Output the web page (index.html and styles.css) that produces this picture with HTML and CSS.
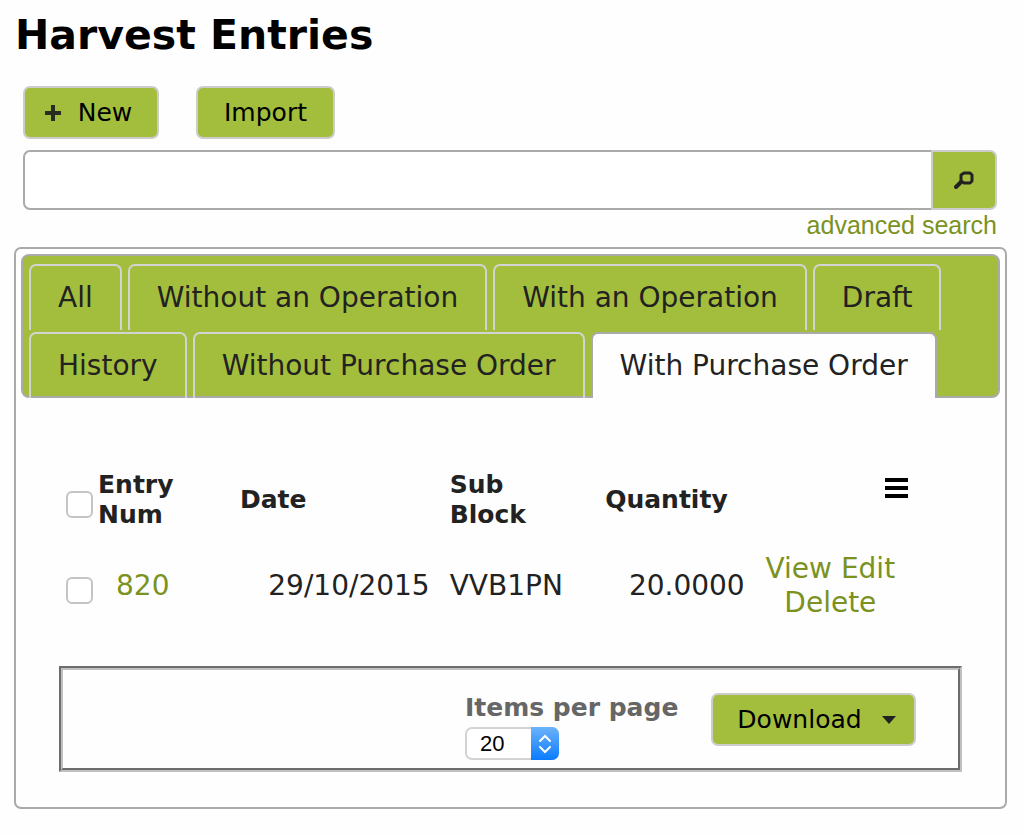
FILE: index.html
```html
<!DOCTYPE html>
<html lang="en">
<head>
    <meta charset="UTF-8">
    <meta name="viewport" content="width=device-width, initial-scale=1.0">
    <title>Harvest Entries</title>
    <link rel="stylesheet" href="styles.css">
</head>
<body>
    <h1>Harvest Entries</h1>

    <div class="toolbar">
        <button type="button" class="btn btn-new">
            <svg width="16" height="16" viewBox="0 0 16 16" aria-hidden="true"><path d="M8 0v16M0 8h16" stroke="#2a2c22" stroke-width="4"/></svg>
            New
        </button>
        <button type="button" class="btn">Import</button>
    </div>

    <form class="search" role="search">
        <input type="text" name="q" aria-label="Search">
        <button type="submit" aria-label="Search">
            <svg width="20" height="18" viewBox="0 0 20 18" aria-hidden="true">
                <path d="M7 4l3-2h6l2 2v6l-2 2h-6l-3-2z" fill="none" stroke="#222" stroke-width="3" stroke-linejoin="round"/>
                <path d="M7 11l-5 5" stroke="#222" stroke-width="4" stroke-linecap="round"/>
            </svg>
        </button>
    </form>
    <div class="advanced"><a href="#">advanced search</a></div>

    <div class="panel">
        <nav class="tabs">
            <a href="#">All</a>
            <a href="#">Without an Operation</a>
            <a href="#">With an Operation</a>
            <a href="#">Draft</a>
            <a href="#">History</a>
            <a href="#">Without Purchase Order</a>
            <a href="#" class="active">With Purchase Order</a>
        </nav>

        <div class="content">
            <table>
                <thead>
                    <tr>
                        <th class="col-check"><input type="checkbox" aria-label="Select all"></th>
                        <th class="col-num">Entry<br>Num</th>
                        <th class="col-date">Date</th>
                        <th class="col-block">Sub<br>Block</th>
                        <th class="col-qty">Quantity</th>
                        <th class="col-menu">
                            <button type="button" class="menu" aria-label="Columns">
                                <svg width="23" height="20" viewBox="0 0 23 20" aria-hidden="true"><path d="M0 2h23M0 10h23M0 18h23" stroke="#000" stroke-width="4"/></svg>
                            </button>
                        </th>
                    </tr>
                </thead>
                <tbody>
                    <tr>
                        <td class="col-check"><input type="checkbox" aria-label="Select entry 820"></td>
                        <td class="num"><a href="#">820</a></td>
                        <td class="date">29/10/2015</td>
                        <td class="block">VVB1PN</td>
                        <td class="qty">20.0000</td>
                        <td class="actions"><a href="#">View</a> <a href="#">Edit</a> <a href="#">Delete</a></td>
                    </tr>
                </tbody>
            </table>

            <fieldset class="footer">
                <div class="per-page">
                    <label for="per-page">Items per page</label>
                    <div class="select">
                        <select id="per-page" name="per-page">
                            <option>10</option>
                            <option selected>20</option>
                            <option>50</option>
                        </select>
                        <span class="arrows">
                            <svg width="14" height="20" viewBox="0 0 14 20" aria-hidden="true"><path d="M2 7l5-5 5 5M2 13l5 5 5-5" fill="none" stroke="#fff" stroke-width="2" stroke-linecap="round"/></svg>
                        </span>
                    </div>
                </div>
                <button type="button" class="btn btn-download">
                    Download
                    <svg width="14" height="8" viewBox="0 0 14 8" aria-hidden="true"><path d="M0 0h14L7 8z" fill="#222"/></svg>
                </button>
            </fieldset>
        </div>
    </div>
</body>
</html>
```
FILE: styles.css
```css
* {
    box-sizing: border-box;
}

body {
    margin: 0;
    padding: 10px 17px 20px 14px;
    background-color: #fefefe;
    color: #222;
    font-family: Verdana, "DejaVu Sans", sans-serif;
    font-size: 28px;
    line-height: 34px;
}

h1 {
    margin: 0 0 26px 1px;
    color: #000;
    font-size: 41px;
    line-height: 50px;
}

a {
    color: #7b921e;
    text-decoration: none;
}

button {
    cursor: pointer;
}

.toolbar {
    display: flex;
    gap: 37px;
    margin: 0 10px 11px 9px;
}

.btn {
    display: flex;
    align-items: center;
    justify-content: center;
    min-width: 139px;
    height: 53px;
    padding: 0 20px;
    background-color: #a3be3c;
    border: 2px solid #ccc;
    border-radius: 7px;
    color: #000;
    font-family: inherit;
    font-size: 25px;
}

.btn-new {
    gap: 17px;
    min-width: 136px;
    padding: 0 23px 0 18px;
}

.search {
    display: flex;
    margin: 0 10px 0 9px;
}

.search input {
    flex: 1;
    min-width: 0;
    height: 60px;
    padding: 0 16px;
    border: 2px solid #aaa;
    border-right: none;
    border-radius: 7px 0 0 7px;
    background-color: #fff;
    font: inherit;
}

.search button {
    display: flex;
    align-items: center;
    justify-content: center;
    width: 66px;
    height: 60px;
    padding: 0;
    background-color: #a3be3c;
    border: 2px solid #ccc;
    border-radius: 0 7px 7px 0;
}

.advanced {
    margin: 0 10px 7px;
    text-align: right;
    font-family: "Liberation Sans", Arial, sans-serif;
    font-size: 25px;
    line-height: 30px;
}

.panel {
    padding: 5px;
    border: 2px solid #aaa;
    border-radius: 7px;
}

.tabs {
    display: flex;
    flex-wrap: wrap;
    gap: 4px 6px;
    padding: 8px 6px 0;
    background-color: #a3be3c;
    border: 2px solid #aaa;
    border-radius: 8px;
}

/* tabs hang 2px over the bar's bottom border */
.tabs a {
    height: 66px;
    margin-bottom: -2px;
    padding: 15px 27px 0;
    border: 2px solid #d3d3d3;
    border-bottom: none;
    border-radius: 7px 7px 0 0;
    color: #222;
}

.tabs .active {
    background-color: #fefefe;
    border-color: #aaa;
}

.content {
    padding: 72px 38px 30px;
}

table {
    width: 100%;
    table-layout: fixed;
    border-collapse: collapse;
}

th,
td {
    padding: 0;
    text-align: left;
}

th {
    padding-bottom: 4px;
    font-size: 25px;
    line-height: 30px;
}

tbody td {
    height: 104px;
}

.col-check {
    width: 39px;
}

.col-num {
    width: 142px;
}

.col-date {
    width: 23%;
}

.col-block,
.col-qty {
    width: 17%;
}

.col-block,
.block {
    padding-left: 2px;
}

.col-qty {
    padding-left: 4px;
}

.col-menu {
    padding-right: 54px;
    text-align: right;
    vertical-align: top;
}

.num {
    padding-left: 18px;
}

.date {
    padding-right: 18px;
    text-align: right;
}

.qty {
    padding-right: 10px;
    text-align: right;
}

.actions {
    padding-right: 56px;
    text-align: center;
}

input[type="checkbox"] {
    appearance: none;
    display: block;
    width: 27px;
    height: 27px;
    margin: 8px 0 0 7px;
    border: 2px solid #c4c4c4;
    border-radius: 6px;
    background-color: #fff;
}

input[type="checkbox"]:checked {
    background-color: #a3be3c;
}

.menu {
    display: inline-flex;
    align-items: center;
    height: 36px;
    padding: 0;
    border: none;
    background: none;
}

.footer {
    display: flex;
    justify-content: flex-end;
    gap: 28px;
    margin: 28px 0 0;
    padding: 23px 42px 8px;
    border: 4px groove #c0c0c0;
}

.per-page {
    width: 218px;
}

.per-page label {
    display: block;
    color: #666;
    font-size: 25px;
    font-weight: bold;
    line-height: 30px;
}

.select {
    position: relative;
    width: 94px;
    margin-top: 4px;
}

.select select {
    appearance: none;
    display: block;
    width: 100%;
    height: 33px;
    padding: 0 34px 0 13px;
    border: 2px solid #d3d3d3;
    border-radius: 7px;
    background-color: #fff;
    color: #000;
    font-family: "Liberation Sans", Arial, sans-serif;
    font-size: 22px;
}

.arrows {
    position: absolute;
    top: 0;
    right: 0;
    display: flex;
    align-items: center;
    justify-content: center;
    width: 28px;
    height: 33px;
    border-radius: 0 7px 7px 0;
    background: linear-gradient(#6cb3fa, #0a7bff);
    pointer-events: none;
}

.btn-download {
    gap: 20px;
    min-width: 205px;
    padding: 0 18px 0 24px;
}
```
